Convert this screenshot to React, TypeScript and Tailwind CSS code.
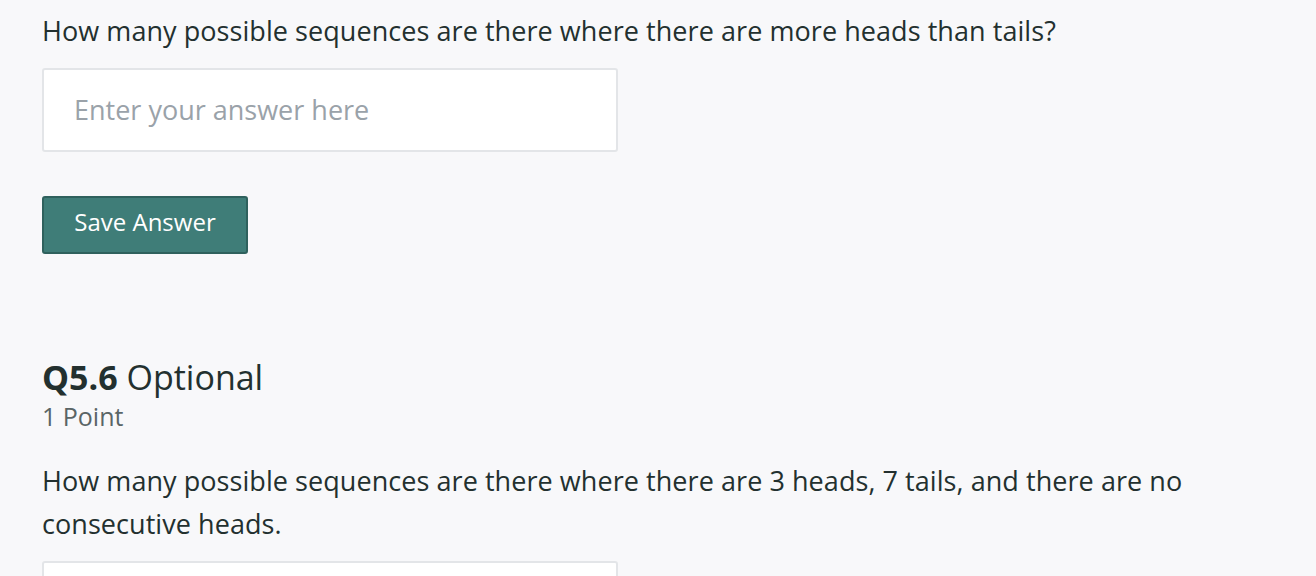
export default function App() {
  return (
    <div className="w-[1316px] h-[576px] overflow-hidden bg-[#f8f8fa] pl-[42px] text-[#23302f]" style={{ fontFamily: '"Open Sans", sans-serif' }}>
      <p className="pt-[9px] text-[27px] leading-[43px] tracking-[0.06px]">How many possible sequences are there where there are more heads than tails?</p>
      <div className="mt-[16px] w-[576px] h-[84px] bg-white border-2 border-[#e3e5e8] rounded-[3px] flex items-center pl-[30px]">
        <span className="text-[27px] text-[#9aa2a9]">Enter your answer here</span>
      </div>
      <button className="mt-[44px] w-[206px] h-[58px] bg-[#3f7d78] border-2 border-[#2f615d] rounded-[3px] text-white text-[24px] font-medium flex items-center justify-center pb-[6px]">Save Answer</button>
      <div className="mt-[103px] text-[34px] leading-[40px]"><span className="font-bold">Q5.6</span> Optional</div>
      <div className="text-[25px] leading-[38px] text-[#5a6566]">1 Point</div>
      <p className="mt-[24px] w-[1200px] text-[27px] leading-[43px] tracking-[0.06px]">How many possible sequences are there where there are 3 heads, 7 tails, and there are no consecutive heads.</p>
      <div className="mt-[16px] w-[576px] h-[84px] bg-white border-2 border-[#e3e5e8] rounded-[3px]"></div>
    </div>
  );
}
